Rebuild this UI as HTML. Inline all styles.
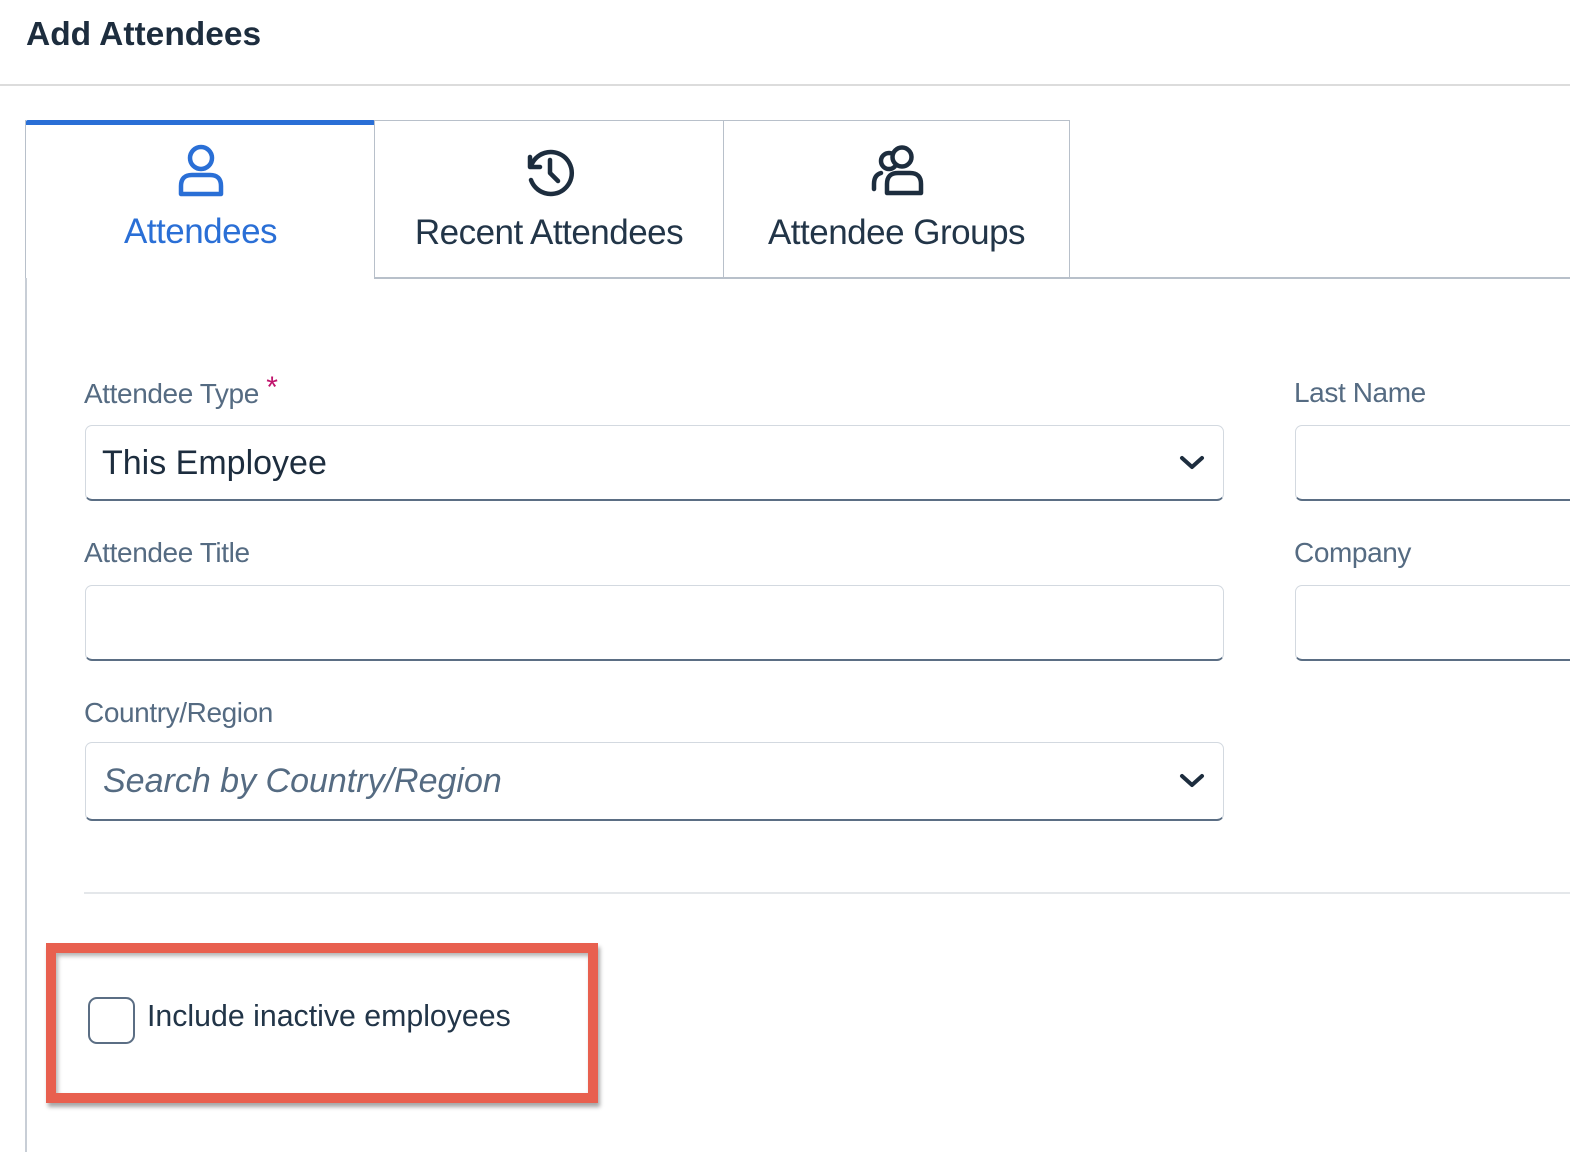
<!DOCTYPE html>
<html><head><meta charset="utf-8"><style>
*{box-sizing:border-box;margin:0;padding:0}
body{width:1570px;height:1152px;background:#fff;position:relative;overflow:hidden;font-family:"Liberation Sans",Arial,sans-serif;color:#223548}
.a{position:absolute}
.lbl{position:absolute;font-size:28px;color:#556b82;letter-spacing:-0.4px}
.inp{position:absolute;height:76px;border:1.5px solid #d3d9e0;border-bottom:2.5px solid #5b6e84;border-radius:7px;background:#fff}
.tab{position:absolute;top:120px;height:158px;border:1.5px solid #b8c0ca;border-bottom:none;background:#fff;text-align:center}
.tab .t{position:absolute;left:0;right:0;top:92px;font-size:35px;letter-spacing:-0.5px;color:#223548}
.chev{position:absolute;right:18px;top:28px}
</style></head><body>
<div class="a" style="left:26px;top:16px;font-size:33.5px;font-weight:bold;color:#1d2d3e">Add Attendees</div>
<div class="a" style="left:0;top:84px;width:1570px;height:2px;background:#dcdcdc"></div>

<div class="a" style="left:25px;top:278px;width:2px;height:874px;background:#c8ced6"></div>

<div class="tab" style="left:25px;width:350px;border-top:none;border-right:none">
  <div class="a" style="left:0;top:0;width:349px;height:5px;background:#2a6fd6;border-radius:2px 2px 0 0"></div>
  <svg class="a" style="left:150px;top:22px" width="50" height="56" viewBox="0 0 50 56"><circle cx="25" cy="16" r="11" fill="none" stroke="#2a6fd6" stroke-width="4.5"/><path d="M5 52 V44 Q5 33 16 33 H34 Q45 33 45 44 V52 Z" fill="none" stroke="#2a6fd6" stroke-width="4.5" stroke-linejoin="round"/></svg>
  <div class="t" style="color:#2a6fd6">Attendees</div>
</div>
<div class="tab" style="left:374px;width:350px">
  <svg class="a" style="left:147px;top:24px" width="56" height="54" viewBox="0 0 56 54"><path d="M8 12 V22 H18" fill="none" stroke="#1d2d3e" stroke-width="4.5" stroke-linecap="round" stroke-linejoin="round"/><path d="M9 21 A21 21 0 1 1 9 35" fill="none" stroke="#1d2d3e" stroke-width="4.5" stroke-linecap="round"/><path d="M28 15 V28 L36 36" fill="none" stroke="#1d2d3e" stroke-width="4.5" stroke-linecap="round" stroke-linejoin="round"/></svg>
  <div class="t">Recent Attendees</div>
</div>
<div class="tab" style="left:723px;width:347px">
  <svg class="a" style="left:144px;top:20px" width="60" height="56" viewBox="0 0 60 56"><circle cx="21" cy="20" r="8" fill="none" stroke="#1d2d3e" stroke-width="4.5"/><path d="M6 48 V43 Q6 34 13 32" fill="none" stroke="#1d2d3e" stroke-width="4.5" stroke-linecap="round"/><circle cx="34" cy="16" r="9.5" fill="#fff" stroke="#1d2d3e" stroke-width="4.5"/><path d="M19 52 V43 Q19 32 30 32 H42 Q53 32 53 43 V52 Z" fill="#fff" stroke="#1d2d3e" stroke-width="4.5" stroke-linejoin="round"/></svg>
  <div class="t">Attendee Groups</div>
</div>
<div class="a" style="left:374px;top:277px;width:1196px;height:2px;background:#b8c0ca"></div>

<div class="lbl" style="left:84px;top:377px">Attendee Type <span style="color:#c0146c;font-size:30px;position:relative;top:-6px">*</span></div>
<div class="inp" style="left:85px;top:425px;width:1139px"><div class="a" style="left:16px;top:18px;font-size:34px;color:#1d2d3e">This Employee</div>
<svg class="chev" width="26" height="18" viewBox="0 0 26 18"><path d="M3 4 L13 13 L23 4" fill="none" stroke="#1d2d3e" stroke-width="4" stroke-linecap="round" stroke-linejoin="round"/></svg></div>

<div class="lbl" style="left:1294px;top:377px">Last Name</div>
<div class="inp" style="left:1295px;top:425px;width:300px"></div>

<div class="lbl" style="left:84px;top:537px">Attendee Title</div>
<div class="inp" style="left:85px;top:585px;width:1139px"></div>
<div class="lbl" style="left:1294px;top:537px">Company</div>
<div class="inp" style="left:1295px;top:585px;width:300px"></div>

<div class="lbl" style="left:84px;top:697px">Country/Region</div>
<div class="inp" style="left:85px;top:742px;width:1139px;height:79px"><div class="a" style="left:17px;top:19px;font-size:34px;font-style:italic;color:#556b82">Search by Country/Region</div>
<svg class="chev" style="top:29px" width="26" height="18" viewBox="0 0 26 18"><path d="M3 4 L13 13 L23 4" fill="none" stroke="#1d2d3e" stroke-width="4" stroke-linecap="round" stroke-linejoin="round"/></svg></div>

<div class="a" style="left:84px;top:892px;width:1486px;height:2px;background:#e4e7ea"></div>

<div class="a" style="left:46px;top:943px;width:552px;height:160px;border:10px solid #e8604f;box-shadow:2px 4px 4px rgba(0,0,0,0.35), inset 2px 3px 4px rgba(0,0,0,0.3)"></div>
<div class="a" style="left:88px;top:997px;width:47px;height:47px;border:2px solid #5b6e84;border-radius:9px;background:#fff"></div>
<div class="a" style="left:147px;top:1000px;font-size:30.3px;color:#223548">Include inactive employees</div>
</body></html>
